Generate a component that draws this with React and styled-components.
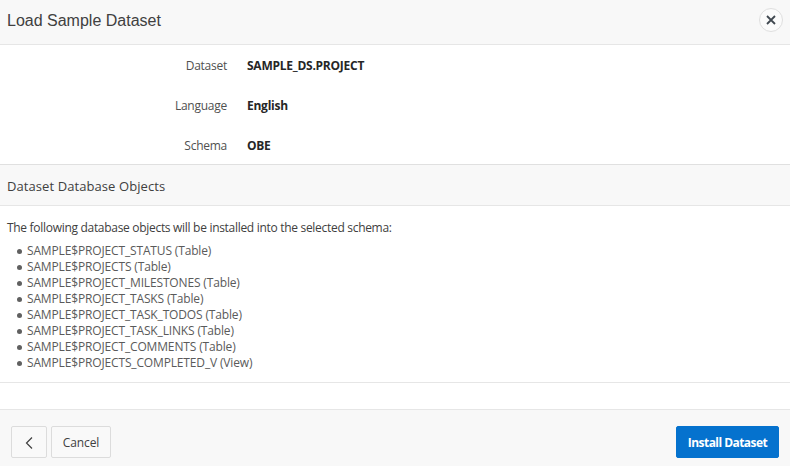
import React from 'react';
import styled, { createGlobalStyle } from 'styled-components';

const GlobalStyle = createGlobalStyle`
  html, body {
    margin: 0;
    padding: 0;
    background: #ffffff;
  }
`;

const Dialog = styled.div`
  width: 790px;
  height: 466px;
  display: flex;
  flex-direction: column;
  overflow: hidden;
  font-family: "Open Sans", "Noto Sans", sans-serif;
  font-size: 12px;
  color: #404040;
`;

const Header = styled.header`
  height: 45px;
  flex: none;
  box-sizing: border-box;
  display: flex;
  align-items: center;
  justify-content: space-between;
  padding: 0 7px 4px;
  background: #f8f8f8;
  border-bottom: 1px solid #e6e6e6;
`;

const Title = styled.h1`
  margin: 2px 0 0;
  font-family: "Liberation Sans", Arial, sans-serif;
  font-size: 16px;
  font-weight: 400;
  color: #404040;
`;

const CloseButton = styled.button`
  width: 24px;
  height: 24px;
  padding: 0;
  display: flex;
  align-items: center;
  justify-content: center;
  background: #fbfbfb;
  border: 1px solid #dfdfdf;
  border-radius: 50%;
  color: #404850;
`;

const Fields = styled.div`
  height: 119px;
  flex: none;
  display: flex;
  flex-direction: column;
  gap: 1px;
`;

const FieldRow = styled.div`
  height: 39px;
  flex: none;
  box-sizing: border-box;
  padding-top: 2px;
  display: grid;
  grid-template-columns: 227px 1fr;
  column-gap: 20px;
  align-items: center;
`;

const FieldLabel = styled.span`
  text-align: right;
  color: #505050;
  letter-spacing: -0.25px;
`;

const FieldValue = styled.span`
  font-weight: 700;
  color: #262626;
  letter-spacing: -0.25px;
`;

const SectionHeader = styled.div`
  height: 42px;
  flex: none;
  box-sizing: border-box;
  display: flex;
  align-items: center;
  padding: 2px 7px 0;
  background: #f8f8f8;
  border-top: 1px solid #e0e0e0;
  border-bottom: 1px solid #e6e6e6;
  font-size: 13px;
  letter-spacing: 0.08px;
  color: #404040;
`;

const SectionBody = styled.section`
  height: 177px;
  flex: none;
  padding: 14px 7px 0;
  border-bottom: 1px solid #e6e6e6;
  box-sizing: border-box;
`;

const Intro = styled.p`
  margin: 0 0 7px;
  line-height: 16px;
  letter-spacing: -0.3px;
`;

const ObjectList = styled.ul`
  margin: 0;
  padding: 0 0 0 10px;
  list-style: none;
  line-height: 16px;
  color: #5a5a5a;
  letter-spacing: -0.15px;
`;

const ObjectItem = styled.li`
  display: flex;
  align-items: center;
  gap: 5px;

  &::before {
    content: '';
    width: 5px;
    height: 5px;
    border-radius: 50%;
    background: #606060;
    flex: none;
  }
`;

const Spacer = styled.div`
  flex: 1;
`;

const Footer = styled.footer`
  height: 57px;
  flex: none;
  box-sizing: border-box;
  display: flex;
  align-items: flex-start;
  justify-content: space-between;
  padding: 16px 11px 0;
  background: #f8f8f8;
  border-top: 1px solid #e6e6e6;
`;

const ButtonGroup = styled.div`
  display: flex;
  gap: 4px;
`;

const Button = styled.button`
  height: 32px;
  padding: 1px 0 0;
  box-sizing: border-box;
  display: flex;
  align-items: center;
  justify-content: center;
  width: ${(p) => p.$width}px;
  font-family: inherit;
  font-size: 12px;
  border-radius: 2px;
  background: ${(p) => (p.$primary ? '#0572ce' : '#f9f9f9')};
  border: 1px solid ${(p) => (p.$primary ? '#0572ce' : '#dcdcdc')};
  color: ${(p) => (p.$primary ? '#ffffff' : '#404040')};
  font-weight: ${(p) => (p.$primary ? 700 : 400)};
  letter-spacing: ${(p) => (p.$primary ? '-0.55px' : '-0.1px')};
`;

const fields = [
  ['Dataset', 'SAMPLE_DS.PROJECT'],
  ['Language', 'English'],
  ['Schema', 'OBE'],
];

const objects = [
  'SAMPLE$PROJECT_STATUS (Table)',
  'SAMPLE$PROJECTS (Table)',
  'SAMPLE$PROJECT_MILESTONES (Table)',
  'SAMPLE$PROJECT_TASKS (Table)',
  'SAMPLE$PROJECT_TASK_TODOS (Table)',
  'SAMPLE$PROJECT_TASK_LINKS (Table)',
  'SAMPLE$PROJECT_COMMENTS (Table)',
  'SAMPLE$PROJECTS_COMPLETED_V (View)',
];

export default function App() {
  return (
    <>
      <GlobalStyle />
      <Dialog>
        <Header>
          <Title>Load Sample Dataset</Title>
          <CloseButton aria-label="Close">
            <svg width="10" height="10" viewBox="0 0 10 10">
              <path d="M1 1l8 8M9 1l-8 8" stroke="currentColor" strokeWidth="1.8" fill="none" />
            </svg>
          </CloseButton>
        </Header>

        <Fields>
          {fields.map(([label, value]) => (
            <FieldRow key={label}>
              <FieldLabel>{label}</FieldLabel>
              <FieldValue>{value}</FieldValue>
            </FieldRow>
          ))}
        </Fields>

        <SectionHeader>Dataset Database Objects</SectionHeader>

        <SectionBody>
          <Intro>The following database objects will be installed into the selected schema:</Intro>
          <ObjectList>
            {objects.map((name) => (
              <ObjectItem key={name}>{name}</ObjectItem>
            ))}
          </ObjectList>
        </SectionBody>

        <Spacer />

        <Footer>
          <ButtonGroup>
            <Button $width={36} aria-label="Back">
              <svg width="10" height="14" viewBox="0 0 10 14">
                <path d="M8 1.5L2.5 7 8 12.5" stroke="currentColor" strokeWidth="1.2" fill="none" />
              </svg>
            </Button>
            <Button $width={60}>Cancel</Button>
          </ButtonGroup>
          <Button $primary $width={103}>Install Dataset</Button>
        </Footer>
      </Dialog>
    </>
  );
}
